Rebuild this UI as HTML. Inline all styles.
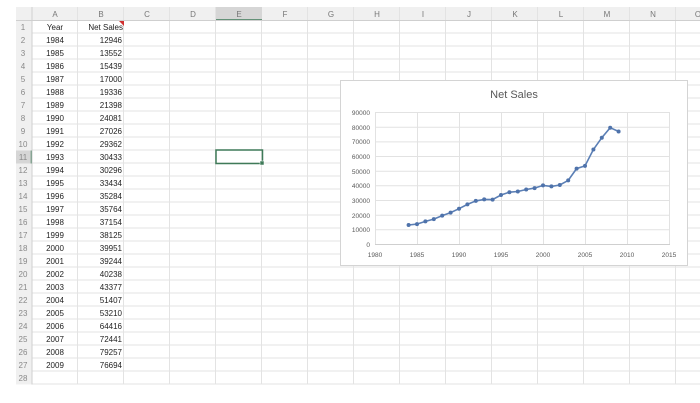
<!DOCTYPE html>
<html><head><meta charset="utf-8"><style>
html,body{margin:0;padding:0;background:#fff;width:700px;height:403px;overflow:hidden}
svg{display:block;font-family:"Liberation Sans",sans-serif}
</style></head><body>
<svg width="700" height="403" viewBox="0 0 700 403" xmlns="http://www.w3.org/2000/svg">
<defs>
<pattern id="rows" x="0" y="20.5" width="700" height="13" patternUnits="userSpaceOnUse"><line x1="0" y1="12.5" x2="700" y2="12.5" stroke="#e3e3e3" stroke-width="1"/></pattern>
<pattern id="cols" x="32" y="0" width="46" height="403" patternUnits="userSpaceOnUse"><line x1="45.5" y1="0" x2="45.5" y2="403" stroke="#e3e3e3" stroke-width="1"/></pattern>
</defs>
<rect x="16" y="7" width="684" height="13.5" fill="#f0f0f0"/>
<rect x="16" y="20.5" width="16" height="364" fill="#f0f0f0"/>
<rect x="32" y="20.5" width="668" height="364" fill="url(#rows)"/>
<rect x="32" y="7" width="668" height="377.5" fill="url(#cols)"/>
<rect x="216" y="7" width="46" height="13.5" fill="#d6d6d6"/>
<line x1="216" y1="20" x2="262" y2="20" stroke="#3f7a58" stroke-width="1.5"/>
<rect x="16" y="150.5" width="16" height="13" fill="#d6d6d6"/>
<line x1="31.5" y1="150.5" x2="31.5" y2="163.5" stroke="#3f7a58" stroke-width="1.5"/>
<line x1="16" y1="20.5" x2="700" y2="20.5" stroke="#cfcfcf"/>
<line x1="32" y1="7" x2="32" y2="384.5" stroke="#cfcfcf"/>
<g font-size="8" fill="#777" text-anchor="middle">
<text x="55" y="17">A</text><text x="101" y="17">B</text><text x="147" y="17">C</text><text x="193" y="17">D</text><text x="239" y="17">E</text><text x="285" y="17">F</text><text x="331" y="17">G</text><text x="377" y="17">H</text><text x="423" y="17">I</text><text x="469" y="17">J</text><text x="515" y="17">K</text><text x="561" y="17">L</text><text x="607" y="17">M</text><text x="653" y="17">N</text><text x="698" y="17">O</text>
</g>
<g font-size="8" fill="#888" text-anchor="middle">
<text x="23" y="30">1</text><text x="23" y="43">2</text><text x="23" y="56">3</text><text x="23" y="69">4</text><text x="23" y="82">5</text><text x="23" y="95">6</text><text x="23" y="108">7</text><text x="23" y="121">8</text><text x="23" y="134">9</text><text x="23" y="147">10</text><text x="23" y="160">11</text><text x="23" y="173">12</text><text x="23" y="186">13</text><text x="23" y="199">14</text><text x="23" y="212">15</text><text x="23" y="225">16</text><text x="23" y="238">17</text><text x="23" y="251">18</text><text x="23" y="264">19</text><text x="23" y="277">20</text><text x="23" y="290">21</text><text x="23" y="303">22</text><text x="23" y="316">23</text><text x="23" y="329">24</text><text x="23" y="342">25</text><text x="23" y="355">26</text><text x="23" y="368">27</text><text x="23" y="381">28</text>
</g>
<g font-size="8" fill="#222" text-anchor="middle">
<text x="55" y="30">Year</text><text x="55" y="43">1984</text><text x="55" y="56">1985</text><text x="55" y="69">1986</text><text x="55" y="82">1987</text><text x="55" y="95">1988</text><text x="55" y="108">1989</text><text x="55" y="121">1990</text><text x="55" y="134">1991</text><text x="55" y="147">1992</text><text x="55" y="160">1993</text><text x="55" y="173">1994</text><text x="55" y="186">1995</text><text x="55" y="199">1996</text><text x="55" y="212">1997</text><text x="55" y="225">1998</text><text x="55" y="238">1999</text><text x="55" y="251">2000</text><text x="55" y="264">2001</text><text x="55" y="277">2002</text><text x="55" y="290">2003</text><text x="55" y="303">2004</text><text x="55" y="316">2005</text><text x="55" y="329">2006</text><text x="55" y="342">2007</text><text x="55" y="355">2008</text><text x="55" y="368">2009</text>
</g>
<g font-size="8" fill="#222" text-anchor="end">
<text x="123" y="30">Net Sales</text><text x="122" y="43">12946</text><text x="122" y="56">13552</text><text x="122" y="69">15439</text><text x="122" y="82">17000</text><text x="122" y="95">19336</text><text x="122" y="108">21398</text><text x="122" y="121">24081</text><text x="122" y="134">27026</text><text x="122" y="147">29362</text><text x="122" y="160">30433</text><text x="122" y="173">30296</text><text x="122" y="186">33434</text><text x="122" y="199">35284</text><text x="122" y="212">35764</text><text x="122" y="225">37154</text><text x="122" y="238">38125</text><text x="122" y="251">39951</text><text x="122" y="264">39244</text><text x="122" y="277">40238</text><text x="122" y="290">43377</text><text x="122" y="303">51407</text><text x="122" y="316">53210</text><text x="122" y="329">64416</text><text x="122" y="342">72441</text><text x="122" y="355">79257</text><text x="122" y="368">76694</text>
</g>
<polygon points="119,21 124,21 124,26" fill="#d03030"/>
<rect x="216" y="150" width="46.5" height="13.5" fill="none" stroke="#3f7a58" stroke-width="1.5"/>
<rect x="260" y="161" width="4" height="4" fill="#3f7a58" stroke="#fff" stroke-width="0.5"/>
<!-- chart -->
<rect x="340.5" y="80.5" width="347" height="185" fill="#fff" stroke="#d4d4d4"/>
<text x="514" y="98" font-size="11" fill="#595959" text-anchor="middle">Net Sales</text>
<g stroke="#e2e2e2" stroke-width="1">
<line x1="375" y1="112.5" x2="670" y2="112.5"/><line x1="375" y1="127.2" x2="670" y2="127.2"/><line x1="375" y1="141.9" x2="670" y2="141.9"/><line x1="375" y1="156.5" x2="670" y2="156.5"/><line x1="375" y1="171.2" x2="670" y2="171.2"/><line x1="375" y1="185.8" x2="670" y2="185.8"/><line x1="375" y1="200.5" x2="670" y2="200.5"/><line x1="375" y1="215.2" x2="670" y2="215.2"/><line x1="375" y1="229.8" x2="670" y2="229.8"/>
<line x1="375.5" y1="112" x2="375.5" y2="244"/><line x1="417.5" y1="112" x2="417.5" y2="244"/><line x1="459.5" y1="112" x2="459.5" y2="244"/><line x1="501.5" y1="112" x2="501.5" y2="244"/><line x1="543.5" y1="112" x2="543.5" y2="244"/><line x1="585.5" y1="112" x2="585.5" y2="244"/><line x1="627.5" y1="112" x2="627.5" y2="244"/><line x1="669.5" y1="112" x2="669.5" y2="244"/>
</g>
<line x1="375" y1="244.5" x2="670" y2="244.5" stroke="#cfcfcf"/>
<g font-size="6.5" fill="#595959" text-anchor="end">
<text x="370" y="115">90000</text><text x="370" y="130">80000</text><text x="370" y="144">70000</text><text x="370" y="159">60000</text><text x="370" y="174">50000</text><text x="370" y="188">40000</text><text x="370" y="203">30000</text><text x="370" y="218">20000</text><text x="370" y="232">10000</text><text x="370" y="247">0</text>
</g>
<g font-size="6.5" fill="#595959" text-anchor="middle">
<text x="375" y="257">1980</text><text x="417" y="257">1985</text><text x="459" y="257">1990</text><text x="501" y="257">1995</text><text x="543" y="257">2000</text><text x="585" y="257">2005</text><text x="627" y="257">2010</text><text x="669" y="257">2015</text>
</g>
<polyline fill="none" stroke="#5b7fb5" stroke-width="1.6" points="408.6,225 417,224.1 425.4,221.4 433.8,219.1 442.2,215.6 450.6,212.6 459,208.7 467.4,204.4 475.8,200.9 484.2,199.4 492.6,199.6 501,195 509.4,192.2 517.8,191.5 526.2,189.5 534.6,188.1 543,185.4 551.4,186.4 559.8,185 568.2,180.4 576.6,168.6 585,165.9 593.4,149.5 601.8,137.7 610.2,127.7 618.6,131.5"/>
<g fill="#4f73ab">
<circle cx="408.6" cy="225" r="2"/><circle cx="417" cy="224.1" r="2"/><circle cx="425.4" cy="221.4" r="2"/><circle cx="433.8" cy="219.1" r="2"/><circle cx="442.2" cy="215.6" r="2"/><circle cx="450.6" cy="212.6" r="2"/><circle cx="459" cy="208.7" r="2"/><circle cx="467.4" cy="204.4" r="2"/><circle cx="475.8" cy="200.9" r="2"/><circle cx="484.2" cy="199.4" r="2"/><circle cx="492.6" cy="199.6" r="2"/><circle cx="501" cy="195" r="2"/><circle cx="509.4" cy="192.2" r="2"/><circle cx="517.8" cy="191.5" r="2"/><circle cx="526.2" cy="189.5" r="2"/><circle cx="534.6" cy="188.1" r="2"/><circle cx="543" cy="185.4" r="2"/><circle cx="551.4" cy="186.4" r="2"/><circle cx="559.8" cy="185" r="2"/><circle cx="568.2" cy="180.4" r="2"/><circle cx="576.6" cy="168.6" r="2"/><circle cx="585" cy="165.9" r="2"/><circle cx="593.4" cy="149.5" r="2"/><circle cx="601.8" cy="137.7" r="2"/><circle cx="610.2" cy="127.7" r="2"/><circle cx="618.6" cy="131.5" r="2"/>
</g>
</svg>
</body></html>
